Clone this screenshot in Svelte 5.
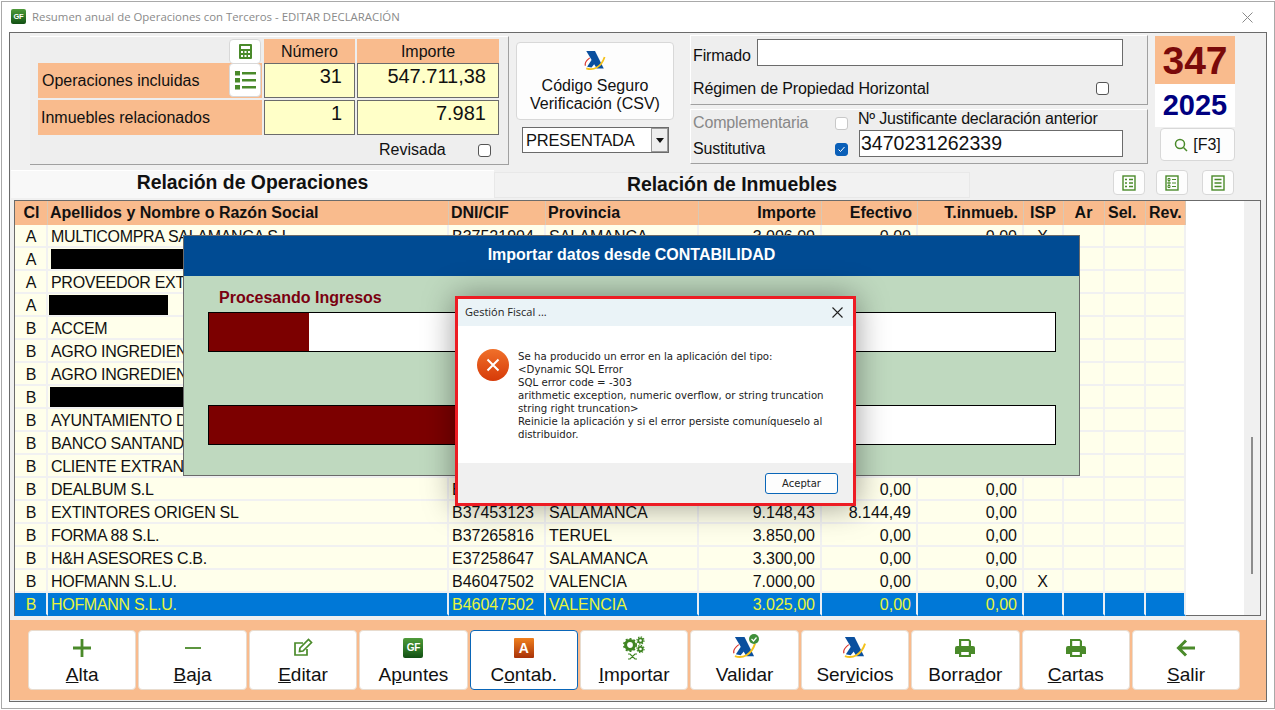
<script>
  const cols = ['ci','name','dni','prov','num','num','num','ctr','ctr','ctr','ctr'];
  const heads = [
    ['Cl','ci'],['Apellidos y Nombre o Razón Social','hn'],['DNI/CIF',''],['Provincia',''],
    ['Importe','num'],['Efectivo','num'],['T.inmueb.','num'],['ISP','ctr'],['Ar','ctr'],['Sel.','ctr hs'],['Rev.','ctr']
  ];
  const rows = [
    { c:['A','MULTICOMPRA SALAMANCA S.L.','B37521904','SALAMANCA','3.006,00','0,00','0,00','X','','',''] },
    { c:['A','','','','','','','','','',''], mask:'m1' },
    { c:['A','PROVEEDOR EXTRANJERO','','','','','','','','',''] },
    { c:['A','','','','','','','','','',''], mask:'m2' },
    { c:['B','ACCEM','','','','','','','','',''] },
    { c:['B','AGRO INGREDIENTES S.L.','','','','','','','','',''] },
    { c:['B','AGRO INGREDIENTES S.L.','','','','','','','','',''] },
    { c:['B','','','','','','','','','',''], mask:'m3' },
    { c:['B','AYUNTAMIENTO DE SALAMANCA','','','','','','','','',''] },
    { c:['B','BANCO SANTANDER S.A.','','','','','','','','',''] },
    { c:['B','CLIENTE EXTRANJERO','','','','','','','','',''] },
    { c:['B','DEALBUM S.L','B37000000','','','0,00','0,00','','','',''] },
    { c:['B','EXTINTORES ORIGEN SL','B37453123','SALAMANCA','9.148,43','8.144,49','0,00','','','',''] },
    { c:['B','FORMA 88 S.L.','B37265816','TERUEL','3.850,00','0,00','0,00','','','',''] },
    { c:['B','H&H ASESORES C.B.','E37258647','SALAMANCA','3.300,00','0,00','0,00','','','',''] },
    { c:['B','HOFMANN S.L.U.','B46047502','VALENCIA','7.000,00','0,00','0,00','X','','',''] },
    { c:['B','HOFMANN S.L.U.','B46047502','VALENCIA','3.025,00','0,00','0,00','','','',''], sel:true }
  ];
  const buttons = [
    { k:'plus', pre:'', u:'A', post:'lta' },
    { k:'minus', pre:'', u:'B', post:'aja' },
    { k:'edit', pre:'', u:'E', post:'ditar' },
    { k:'gf', pre:'A', u:'p', post:'untes' },
    { k:'a', pre:'C', u:'o', post:'ntab.', focus:true },
    { k:'gears', pre:'', u:'I', post:'mportar' },
    { k:'aeatok', pre:'Validar', u:'', post:'' },
    { k:'aeat', pre:'Ser', u:'v', post:'icios' },
    { k:'print', pre:'Borra', u:'d', post:'or' },
    { k:'print', pre:'', u:'C', post:'artas' },
    { k:'back', pre:'', u:'S', post:'alir' }
  ];
  const msg = [
    'Se ha producido un error en la aplicación del tipo:',
    '<Dynamic SQL Error',
    'SQL error code = -303',
    'arithmetic exception, numeric overflow, or string truncation',
    'string right truncation>',
    'Reinicie la aplicación y si el error persiste comuníqueselo al',
    'distribuidor.'
  ];
</script>

{#snippet aeat(w, h)}
  <svg width={w} height={h} viewBox="0 0 26 24">
    <path d="M3 1h10l10 20h-8z" fill="#0a4f9e"/>
    <path d="M10 10 4 19l5 1 5-6z" fill="#0a4f9e"/>
    <path d="M3 21c8 3 17-1 21-13" fill="none" stroke="#f4c21c" stroke-width="2"/>
    <path d="M2 18c-1-3 1-6 5-9" fill="none" stroke="#d9322a" stroke-width="1.3"/>
  </svg>
{/snippet}

{#snippet gf(size)}
  <span class="gf" style="width:{size}px;height:{size}px;font-size:{size*0.5}px">GF</span>
{/snippet}

{#snippet sheet(kind)}
  <svg width="14" height="16" viewBox="0 0 14 16" fill="none" stroke="#4a8a2a" stroke-width="1.4">
    <rect x="1" y="1" width="12" height="14"/>
    {#if kind === 0}
      <path d="M3 4.500h2M7 4.500h4M3 8h2M7 8h4M3 11.500h2M7 11.500h4"/>
    {:else if kind === 1}
      <path d="M3 3.500h2v2h-2zM7 4.500h4M3 7h2v2h-2zM7 8h4M3 10.500h2v2h-2zM7 11.500h4" stroke-width="1"/>
    {:else}
      <path d="M3.500 4.500h7M3.500 8h7M3.500 11.500h7"/>
    {/if}
  </svg>
{/snippet}

{#snippet btnIcon(k)}
  {#if k === 'plus'}
    <svg width="18" height="18" viewBox="0 0 18 18"><path d="M9 0v18M0 9h18" stroke="#4a8a2a" stroke-width="2.800"/></svg>
  {:else if k === 'minus'}
    <svg width="18" height="18" viewBox="0 0 18 18"><path d="M1 9h16" stroke="#4a8a2a" stroke-width="1.800"/></svg>
  {:else if k === 'edit'}
    <svg width="20" height="20" viewBox="0 0 20 20" fill="none" stroke="#4a8a2a" stroke-width="1.700">
      <path d="M14 11v6H2V5h8"/><path d="M7 10l8.500-8.500 3 3L10 13l-3.500.5z"/>
    </svg>
  {:else if k === 'gf'}
    {@render gf(20)}
  {:else if k === 'a'}
    <span class="aicon">A</span>
  {:else if k === 'gears'}
    <svg width="24" height="24" viewBox="0 0 24 24">
      <g fill="none" stroke="#3f8422">
        <circle cx="8" cy="9" r="4.400" stroke-width="3"/>
        <circle cx="8" cy="9" r="6.200" stroke-width="1.600" stroke-dasharray="2 2"/>
        <circle cx="18.500" cy="4.500" r="2.200" stroke-width="1.800"/>
        <circle cx="18.500" cy="4.500" r="3.600" stroke-width="1.100" stroke-dasharray="1.400 1.400"/>
        <circle cx="18.500" cy="13" r="2.200" stroke-width="1.800"/>
        <circle cx="18.500" cy="13" r="3.600" stroke-width="1.100" stroke-dasharray="1.400 1.400"/>
        <path d="M6 18h2l5 5h2M6 23h2l5-5h2" stroke-width="1.200"/>
      </g>
    </svg>
  {:else if k === 'aeat' || k === 'aeatok'}
    <span class="logo">
      {@render aeat(25, 23)}
      {#if k === 'aeatok'}
        <svg class="ok" width="10" height="10" viewBox="0 0 10 10"><circle cx="5" cy="5" r="5" fill="#3f8f3a"/><path d="M2.500 5l2 2 3-3.500" stroke="#fff" fill="none" stroke-width="1.200"/></svg>
      {/if}
    </span>
  {:else if k === 'print'}
    <svg width="20" height="20" viewBox="0 0 20 20">
      <path fill-rule="evenodd" fill="#4a8a2a" d="M4 1h10l2 2v5h2a2 2 0 0 1 2 2v6h-4v3H4v-3H0v-6a2 2 0 0 1 2-2h2zM6.200 3v5h7.600V3zM6.200 14v3h7.600v-3z"/>
    </svg>
  {:else if k === 'back'}
    <svg width="20" height="18" viewBox="0 0 20 18" fill="none" stroke="#4a8a2a" stroke-width="3"><path d="M19 9H3M10 1.500 2.500 9l7.500 7.500"/></svg>
  {/if}
{/snippet}

<div class="window">
  <header class="titlebar">
    {@render gf(15)}
    <span class="wtitle">Resumen anual de Operaciones con Terceros - EDITAR DECLARACIÓN</span>
    <svg class="wclose" width="11" height="11" viewBox="0 0 11 11"><path d="M.5.500l10 10M10.500.500l-10 10" stroke="#8a8a8a"/></svg>
  </header>

  <div class="frame">
    <section class="top">
      <div class="panel totals">
        <div class="t-grid">
          <div class="t-head-left"><button class="sq calc">
            <svg width="13" height="15" viewBox="0 0 13 15"><path fill-rule="evenodd" fill="#4a8a2a" d="M1 0h11a1 1 0 0 1 1 1v13a1 1 0 0 1-1 1H1a1 1 0 0 1-1-1V1a1 1 0 0 1 1-1zM2 2v3h9V2zM2 7v2h2V7zM5.500 7v2h2V7zM9 7v2h2V7zM2 11v2h2v-2zM5.500 11v2h2v-2zM9 11v2h2v-2z"/></svg>
          </button></div>
          <div class="t-head">Número</div>
          <div class="t-head last">Importe</div>
          <div class="t-label">Operaciones incluidas
            <button class="sq list">
              <svg width="21" height="19" viewBox="0 0 21 19" fill="#4a8a2a"><rect y="0" width="5" height="4.500"/><rect x="7" y="1" width="14" height="2.500"/><rect y="7" width="5" height="4.500"/><rect x="7" y="8" width="14" height="2.500"/><rect y="14" width="5" height="4.500"/><rect x="7" y="15" width="14" height="2.500"/></svg>
            </button>
          </div>
          <div class="t-val">31</div>
          <div class="t-val last">547.711,38</div>
          <div class="t-label second">Inmuebles relacionados</div>
          <div class="t-val second">1</div>
          <div class="t-val second last">7.981</div>
        </div>
        <div class="rev"><span>Revisada</span><i class="chk"></i></div>
      </div>

      <div class="csv-col">
        <button class="csv">
          {@render aeat(24, 21)}
          <span>Código Seguro<br>Verificación (CSV)</span>
        </button>
        <div class="select"><span>PRESENTADA</span><b><i></i></b></div>
      </div>

      <div class="right-col">
        <div class="panel rp1">
          <div class="line1"><span>Firmado</span><div class="input firm"></div></div>
          <div class="line2"><span>Régimen de Propiedad Horizontal</span><i class="chk"></i></div>
        </div>
        <div class="panel rp2">
          <div class="sust">
            <div class="sl muted"><span>Complementaria</span><i class="chk off"></i></div>
            <div class="sl"><span>Sustitutiva</span><i class="chk on"><svg width="9" height="9" viewBox="0 0 9 9"><path d="M1.500 4.500l2 2 4-4.500" stroke="#fff" fill="none"/></svg></i></div>
          </div>
          <div class="just">
            <span>Nº Justificante declaración anterior</span>
            <div class="input code">3470231262339</div>
          </div>
        </div>
      </div>

      <div class="model">
        <div class="m347">347</div>
        <div class="m2025">2025</div>
        <button class="f3">
          <svg width="14" height="14" viewBox="0 0 14 14" fill="none" stroke="#4a8a2a" stroke-width="1.500"><circle cx="6" cy="6" r="4.500"/><path d="M9.500 9.500 13 13"/></svg>
          [F3]
        </button>
      </div>
    </section>

    <nav class="tabs">
      <div class="tab active">Relación de Operaciones</div>
      <div class="tab">Relación de Inmuebles</div>
      <div class="tab-icons">
        <button class="tb i1">{@render sheet(0)}</button>
        <button class="tb i2">{@render sheet(1)}</button>
        <button class="tb i3">{@render sheet(2)}</button>
      </div>
    </nav>

    <div class="grid">
      <div class="rows">
        <div class="row head">
          {#each heads as h}<div class="cell {h[1]}">{h[0]}</div>{/each}
        </div>
        {#each rows as r}
          <div class="row" class:sel={r.sel}>
            {#each r.c as v, i}
              <div class="cell {cols[i]}">
                {#if i === 1 && r.mask}<span class="mask {r.mask}"></span>{:else}{v}{/if}
              </div>
            {/each}
          </div>
        {/each}
      </div>
      <div class="scrollbar"><i></i></div>
    </div>

    <footer class="actions">
      {#each buttons as b}
        <button class="act" class:focus={b.focus}>
          <span class="ico">{@render btnIcon(b.k)}</span>
          <span class="lbl">{b.pre}{#if b.u}<u>{b.u}</u>{/if}{b.post}</span>
        </button>
      {/each}
    </footer>
  </div>

  <div class="progress">
    <div class="p-head">Importar datos desde CONTABILIDAD</div>
    <div class="p-body">
      <div class="p-title">Procesando Ingresos</div>
      <div class="bar"><div class="fill" style="width:100px"></div></div>
      <div class="bar b2"><div class="fill" style="width:420px"></div></div>
    </div>
  </div>

  <div class="err">
    <div class="e-title"><span>Gestión Fiscal ...</span>
      <svg width="11" height="11" viewBox="0 0 11 11"><path d="M.5.500l10 10M10.500.500l-10 10" stroke="#222" stroke-width="1.100"/></svg>
    </div>
    <div class="e-body">
      <svg class="e-icon" width="32" height="32" viewBox="0 0 32 32">
        <defs><linearGradient id="eg" x1="0" y1="0" x2="0" y2="1"><stop offset="0" stop-color="#f0702a"/><stop offset="1" stop-color="#d63a08"/></linearGradient></defs>
        <circle cx="16" cy="16" r="16" fill="url(#eg)"/>
        <path d="M10.500 10.500l11 11M21.500 10.500l-11 11" stroke="#fff" stroke-width="2"/>
      </svg>
      <div class="e-msg">{#each msg as m}<div>{m}</div>{/each}</div>
    </div>
    <div class="e-foot"><button class="ok-btn">Aceptar</button></div>
  </div>
</div>

<style>
  :global(body) { margin: 0; background: #fff; font-family: "Liberation Sans", Arial, sans-serif; }
  * { box-sizing: border-box; }
  button { font-family: inherit; padding: 0; }
  .window { position: relative; width: 1274px; height: 708px; margin: 1px 0 0 1px; border: 1px solid #a9a9a9; background: #fff; overflow: hidden; color: #111; font-size: 16px; }
  .titlebar { height: 30px; display: flex; align-items: center; padding: 0 0 2px 9px; gap: 6px; }
  .wtitle { font-family: "Open Sans", sans-serif; font-size: 11.400px; color: #8a8a8a; }
  .wclose { margin-left: auto; margin-right: 21px; margin-top: 2px; }
  .gf { display: inline-flex; align-items: center; justify-content: center; border-radius: 2px; background: linear-gradient(#4f9a3a 0%, #2f7a26 50%, #124f14 100%); color: #fff; font-weight: 700; font-family: "Liberation Sans", sans-serif; letter-spacing: -.3px; }
  .frame { margin: 0 7px 0 7px; height: 670px; border: 1px solid #6b6b6b; background: #f0f0f0; display: flex; flex-direction: column; }

  .top { height: 134px; display: flex; padding: 3px 0 0 20px; }
  .panel { background: #eee; border-top: 1px solid #fff; border-left: 1px solid #fff; border-right: 1px solid #a0a0a0; border-bottom: 1px solid #a0a0a0; }
  .totals { width: 479px; height: 129px; border-left: 0; padding: 2px 0 0 8px; }
  .t-grid { display: grid; grid-template-columns: 226px 93px 142px; grid-template-rows: 24px 35px 35px; }
  .t-head-left { position: relative; }
  .sq { position: absolute; background: #fff; border: 1px solid #d8d8d8; border-radius: 4px; display: flex; align-items: center; justify-content: center; }
  .calc { left: 191px; top: 0; width: 32px; height: 25px; }
  .t-head { background: #f9bb8d; margin-right: 2px; text-align: center; line-height: 25px; }
  .t-label { position: relative; background: #f9bb8d; margin-right: 2px; line-height: 35px; padding-left: 4px; }
  .t-label.second { margin-top: 2px; height: 35px; padding-left: 3px; }
  .list { left: 191px; top: 0; width: 32px; height: 34px; }
  .t-val { background: #ffffc8; border: 1px solid #6b6b6b; margin-right: 2px; text-align: right; font-size: 20px; padding: 2px 12px 0 0; height: 35px; line-height: 20px; }
  .t-val.second { margin-top: 2px; }
  .last { margin-right: 0; }
  .rev { display: flex; align-items: center; margin-top: 6px; padding-left: 341px; height: 22px; }
  .rev .chk { margin-left: 32px; margin-top: 1px; }
  .chk { display: inline-block; width: 13px; height: 13px; border: 1px solid #555; border-radius: 3px; background: #fff; }
  .chk.off { border-color: #c8c8c8; }
  .chk.on { background: #0a5fb8; border-color: #0a5fb8; display: inline-flex; align-items: center; justify-content: center; }

  .csv-col { width: 181px; padding: 6px 0 0 7px; }
  .csv { width: 158px; height: 78px; background: #fdfdfd; border: 1px solid #d8d8d8; border-radius: 4px; display: flex; flex-direction: column; align-items: center; font-size: 16px; line-height: 18px; padding-top: 7px; color: #111; gap: 6px; }
  .select { margin: 7px 0 0 6px; width: 147px; height: 26px; background: #fff; border: 1px solid #6b6b6b; display: flex; align-items: center; font-size: 16.500px; letter-spacing: -.2px; padding-left: 3px; }
  .select span { flex: 1; }
  .select b { width: 17px; height: 24px; background: #eee; border: 1px solid #999; display: flex; align-items: center; justify-content: center; }
  .select i { border: 4px solid transparent; border-top: 5px solid #111; border-bottom: 0; }

  .right-col { width: 458px; display: flex; flex-direction: column; gap: 4px; margin-top: -1px; }
  .rp1 { height: 70px; border-left: 1px solid #fff; padding: 3px 0 0 2px; }
  .line1 { display: flex; align-items: center; gap: 6px; height: 27px; }
  .line1 span { padding-top: 6px; letter-spacing: -.13px; }
  .input { background: #fff; border: 1px solid #6b6b6b; }
  .firm { width: 366px; height: 27px; }
  .line2 { display: flex; align-items: center; margin-top: 11px; height: 24px; letter-spacing: -.13px; }
  .line2 .chk { margin-left: 167px; margin-top: -2px; }
  .rp2 { height: 55px; display: flex; padding: 0 0 0 2px; position: relative; }
  .sust { width: 166px; }
  .sl { display: flex; justify-content: space-between; align-items: center; height: 26px; padding-right: 22px; letter-spacing: -.15px; }
  .sl .chk { margin-left: auto; margin-right: -11px; }
  .muted { color: #888; }
  .just { flex: 1; font-size: 16px; line-height: 16px; }
  .code { width: 264px; height: 27px; margin-top: 3px; font-size: 19.500px; line-height: 24px; padding-left: 1px; }
  .just span { display: block; padding-top: 1px; margin-left: -1px; letter-spacing: -.2px; }

  .model { width: 80px; margin: 0 0 0 7px; }
  .m347 { height: 48px; background: #f9bb8d; color: #7a0a0a; font-weight: 700; font-size: 39px; text-align: center; line-height: 49px; }
  .m2025 { height: 43px; background: #fff; color: #000080; font-weight: 700; font-size: 29px; text-align: center; line-height: 43px; }
  .f3 { display: flex; margin: 1px 0 0 5px; width: 75px; height: 33px; background: #fdfdfd; border: 1px solid #d8d8d8; border-radius: 4px; align-items: center; justify-content: center; gap: 5px; font-size: 16px; color: #111; }

  .tabs { height: 33px; display: flex; padding: 3px 0 0 1px; position: relative; }
  .tab { font-weight: 700; font-size: 19.400px; text-align: center; }
  .tab.active { width: 483px; height: 28px; background: #f8f8f8; border-top: 1px solid #fff; line-height: 22px; }
  .tab:not(.active) { width: 476px; height: 26px; margin-top: 2px; background: #f2f2f2; border: 1px solid #e8e8e8; line-height: 23px; }
  .tab-icons { display: flex; margin-left: 143px; }
  .tb { width: 32px; height: 25px; background: #fdfdfd; border: 1px solid #d8d8d8; border-radius: 4px; display: flex; align-items: center; justify-content: center; }
  .i2 { margin-left: 11px; }
  .i3 { margin-left: 14px; }

  .grid { margin: 0 5px 0 4px; height: 416px; border: 1px solid #6b6b6b; background: #fff; display: flex; justify-content: space-between; }
  .rows { width: 1171px; }
  .row { display: grid; grid-template-columns: 33px 401px 97px 153px 123px 96px 106px 40px 41px 41px 40px; grid-template-rows: 100%; height: 23px; background: #ffffeb; }
  .cell { border-right: 2px solid #f1f1f1; border-bottom: 2px solid #f1f1f1; line-height: 21px; white-space: nowrap; overflow: hidden; padding: 1px 5px 0 3px; }
  .cell.ci { text-align: center; padding-left: 4px; padding-right: 3px; }
  .cell.name { letter-spacing: -.3px; }
  .cell.ctr { text-align: center; padding-right: 4px; }
  .cell.num { text-align: right; }
  .head { height: 24px; background: #f9bb8d; font-weight: 700; }
  .head .cell { border-right: 1px solid #d9c8b4; border-bottom: 0; line-height: 23px; padding-top: 0; padding-left: 2px; }
  .head .ci { padding-left: 4px; }
  .head .ctr { padding-left: 3px; }
  .head .hs { padding-right: 9px; }
  .sel { background: #0078d7; color: #e9f53c; }
  .sel .cell { border-color: #e8eef4; border-bottom-color: transparent; }
  .mask { display: block; height: 20px; background: #000; }
  .m1 { width: 390px; }
  .m2 { width: 119px; margin-left: -2px; }
  .m3 { width: 390px; margin-left: -1px; }
  .scrollbar { width: 16px; background: #f0f0f0; position: relative; }
  .scrollbar i { position: absolute; left: 7px; top: 236px; width: 2px; height: 137px; background: #8c8c8c; }

  .actions { margin-top: 4px; height: 80px; background: #f9bb8d; display: flex; gap: 2px; padding: 10px 0 0 18px; }
  .act { width: 108.400px; height: 60px; background: #fff; border: 1px solid #e8dccf; border-radius: 4px; display: flex; flex-direction: column; align-items: center; color: #111; font-size: 19px; }
  .act.focus { border-color: #0a66b8; }
  .ico { height: 33px; display: flex; align-items: center; justify-content: center; }
  .lbl { line-height: 22px; }
  .aicon { display: inline-flex; align-items: center; justify-content: center; width: 20px; height: 20px; background: linear-gradient(#f0801e, #a83208); color: #fff; font-weight: 700; font-size: 14px; border-radius: 1px; }
  .logo { position: relative; display: block; height: 23px; }
  .ok { position: absolute; right: -2px; top: -2px; }

  .progress { position: absolute; left: 181px; top: 233px; width: 897px; height: 241px; border: 1px solid #6b6b6b; background: #bfd9bf; }
  .p-head { height: 40px; background: #004b93; color: #fff; font-weight: 700; text-align: center; line-height: 38px; }
  .p-body { padding: 12px 23px 0 24px; }
  .p-title { color: #7a0010; font-weight: 700; padding-left: 11px; height: 24px; line-height: 20px; }
  .bar { height: 40px; background: #fff; border: 1px solid #000; }
  .b2 { margin-top: 53px; }
  .fill { height: 100%; background: #7c0000; }

  .err { position: absolute; left: 453px; top: 294px; width: 401px; height: 210px; border: 3px solid #ed1c24; background: #fff; box-shadow: 0 0 30px rgba(0,0,0,.4); display: flex; flex-direction: column; }
  .e-title { height: 27px; background: #eaf3f7; display: flex; align-items: center; justify-content: space-between; padding: 0 11px 3px 7px; font-family: "Open Sans", sans-serif; font-size: 11px; color: #222; }
  .e-title svg { margin-top: 3px; margin-right: -1px; }
  .e-body { height: 137px; display: flex; padding: 23px 0 0 19px; gap: 9px; }
  .e-msg { font-family: "DejaVu Sans", sans-serif; font-size: 10.200px; line-height: 13px; color: #222; padding-top: 1px; }
  .e-foot { flex: 1; background: #f0f0f0; display: flex; justify-content: flex-end; padding: 10px 15px 0 0; }
  .ok-btn { width: 73px; height: 21px; background: #fdfdfd; border: 1px solid #0a66b8; border-radius: 3px; font-family: "DejaVu Sans", sans-serif; font-size: 10px; color: #222; }
</style>
